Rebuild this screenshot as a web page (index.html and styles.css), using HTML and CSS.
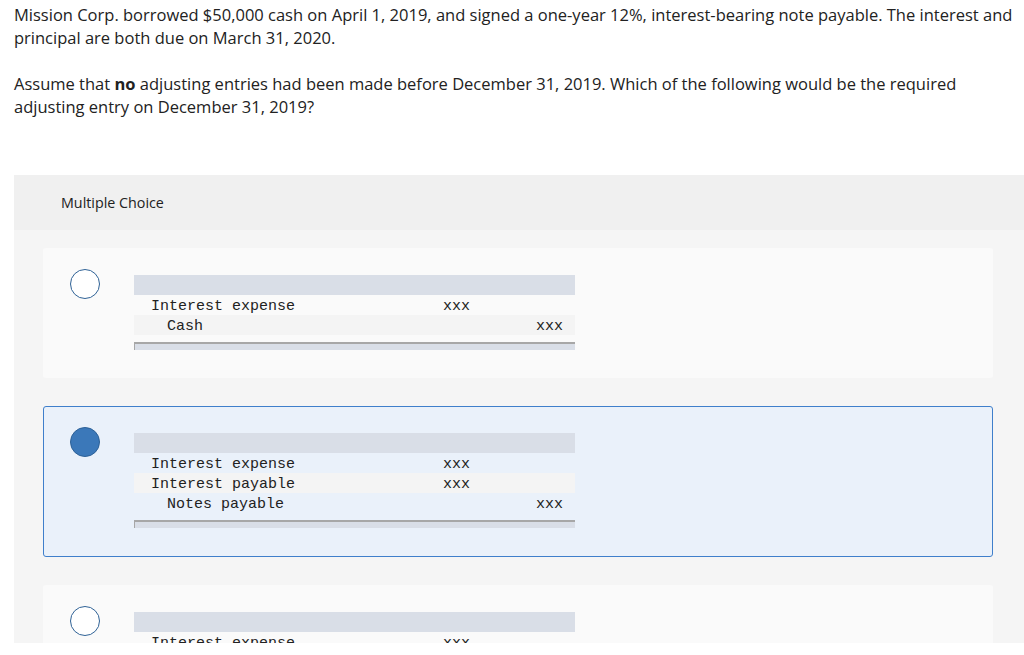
FILE: index.html
```html
<!DOCTYPE html>
<html>
<head>
<meta charset="utf-8">
<link rel="stylesheet" href="styles.css">
</head>
<body>
<div class="page">
  <div class="question">
    <p>Mission Corp. borrowed $50,000 cash on April 1, 2019, and signed a one-year 12%, interest-bearing note payable. The interest and principal are both due on March 31, 2020.</p>
    <p>Assume that <b>no</b> adjusting entries had been made before December 31, 2019. Which of the following would be the required adjusting entry on December 31, 2019?</p>
  </div>
  <section class="mc">
    <div class="mc-head">Multiple Choice</div>
    <div class="mc-body">
      <div class="opt">
        <span class="radio"></span>
        <div class="je">
          <div class="je-top"></div>
          <div class="row"><span class="acct">Interest expense</span><span class="dr">xxx</span><span class="cr"></span></div>
          <div class="row"><span class="acct credit">Cash</span><span class="dr"></span><span class="cr">xxx</span></div>
          <div class="je-bottom"></div>
        </div>
      </div>
      <div class="opt selected">
        <span class="radio"></span>
        <div class="je">
          <div class="je-top"></div>
          <div class="row"><span class="acct">Interest expense</span><span class="dr">xxx</span><span class="cr"></span></div>
          <div class="row"><span class="acct">Interest payable</span><span class="dr">xxx</span><span class="cr"></span></div>
          <div class="row"><span class="acct credit">Notes payable</span><span class="dr"></span><span class="cr">xxx</span></div>
          <div class="je-bottom"></div>
        </div>
      </div>
      <div class="opt">
        <span class="radio"></span>
        <div class="je">
          <div class="je-top"></div>
          <div class="row"><span class="acct">Interest expense</span><span class="dr">xxx</span><span class="cr"></span></div>
          <div class="row"><span class="acct credit">Interest payable</span><span class="dr"></span><span class="cr">xxx</span></div>
          <div class="je-bottom"></div>
        </div>
      </div>
    </div>
  </section>
</div>
</body>
</html>
```

FILE: styles.css
```css
html, body {
  margin: 0;
  padding: 0;
  background: #ffffff;
}
.page {
  height: 643px;
  overflow: hidden;
  font-family: "Open Sans", "Liberation Sans", sans-serif;
  color: #222;
}
.question {
  padding: 3px 0 0 14px;
  width: 1010px;
  font-size: 16.5px;
  line-height: 23px;
}
.question p {
  margin: 0 0 23px 0;
}
.question p:last-child {
  margin-bottom: 0;
}
.mc {
  margin: 57px 0 0 14px;
  background: #f5f5f5;
}
.mc-head {
  height: 55px;
  background: #f0f0f0;
  display: flex;
  align-items: center;
  padding-left: 47px;
  font-size: 14.3px;
  color: #222;
}
.mc-body {
  padding: 18px 31px 40px 29px;
  display: flex;
  flex-direction: column;
  gap: 28px;
}
.opt {
  background: #fafafa;
  border: 1px solid transparent;
  border-radius: 3px;
  display: flex;
  align-items: flex-start;
  padding: 20px 0 27px 26px;
}
.opt.selected {
  background: #eaf1fa;
  border-color: #3f7fcb;
  padding-bottom: 28px;
}
.radio {
  width: 28px;
  height: 28px;
  border: 1.5px solid #2f6296;
  border-radius: 50%;
  background: #fff;
  flex: none;
  margin-right: 34px;
}
.selected .radio {
  background: #3b78b9;
  border-color: #2d6197;
}
.je {
  width: 441px;
  margin-top: 6px;
  font-family: "Liberation Mono", "Courier New", monospace;
  font-size: 15px;
  color: #222;
}
.je-top {
  height: 20px;
  background: #d9dee7;
}
.row {
  display: grid;
  grid-template-columns: 309px 93px 39px;
  box-sizing: border-box;
  height: 20px;
  padding-top: 4px;
  line-height: 16px;
}
.row:nth-child(odd) {
  background: #f4f4f4;
}
.acct {
  padding-left: 17px;
  white-space: pre;
}
.acct.credit {
  padding-left: 33px;
}
.je-bottom {
  margin-top: 7px;
  height: 6px;
  background: #d9dee7;
  border-top: 2px solid #a7a7a7;
  border-left: 1px solid #a7a7a7;
}
```
